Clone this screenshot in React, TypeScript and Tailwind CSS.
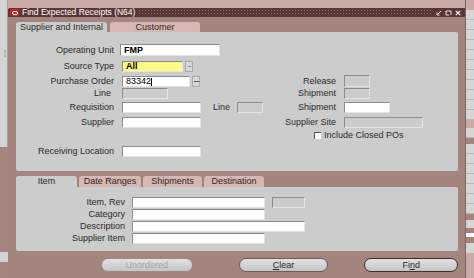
import React from "react";

const lbl = "text-[9px] leading-[11px] text-[#2a2a2a] whitespace-nowrap";

function Input({ className, children }: { className: string; children?: React.ReactNode }) {
  return (
    <div
      className={
        "h-full border border-t-[#8c8c8c] border-l-[#8c8c8c] border-b-[#e4e4e4] border-r-[#e4e4e4] flex items-center px-[3px] text-[9px] leading-[9px] text-black " +
        className
      }
    >
      {children}
    </div>
  );
}

function Row({ className, label, labelW, children }: { className: string; label: string; labelW: string; children?: React.ReactNode }) {
  return (
    <div className={"flex items-center " + className}>
      <div className={lbl + " text-right " + labelW}>{label}</div>
      {children}
    </div>
  );
}

export default function App() {
  const rightRows = [
    "h-[10px] bg-[#c9aca6]",
    "h-[10px] bg-[#d6d6d6] border-b border-[#b8b8b8]",
    "h-[10px] bg-[#d6d6d6] border-b border-[#b8b8b8]",
    "h-[10px] bg-[#d6d6d6] border-b border-[#b8b8b8]",
    "h-[10px] bg-[#d6d6d6] border-b border-[#b8b8b8]",
    "h-[10px] bg-[#d6d6d6] border-b border-[#b8b8b8]",
    "h-[10px] bg-[#d6d6d6] border-b border-[#b8b8b8]",
    "h-[10px] bg-[#d6d6d6] border-b border-[#b8b8b8]",
    "h-[10px] bg-[#d6d6d6] border-b border-[#b8b8b8]",
    "h-[10px] bg-[#d6d6d6] border-b border-[#b8b8b8]",
    "h-[10px] bg-[#d6d6d6] border-b border-[#b8b8b8]",
    "h-[10px] bg-[#d6d6d6] border-b border-[#b8b8b8]",
    "h-[8px] bg-[#c9aca6]",
    "h-[10px] bg-[#d6d6d6] border-b border-[#b8b8b8]",
    "h-[6px] bg-[#a3857d]",
    "h-[10px] bg-[#d6d6d6] border-b border-[#b8b8b8]",
    "h-[10px] bg-[#d6d6d6] border-b border-[#b8b8b8]",
    "h-[10px] bg-[#d6d6d6] border-b border-[#b8b8b8]",
    "h-[10px] bg-[#d6d6d6] border-b border-[#b8b8b8]",
    "h-[10px] bg-[#d6d6d6] border-b border-[#b8b8b8]",
    "h-[10px] bg-[#d6d6d6] border-b border-[#b8b8b8]",
    "h-[10px] bg-[#d6d6d6] border-b border-[#b8b8b8]",
    "h-[6px] bg-[#a3857d]",
    "h-[8px] bg-[#d6d6d6]",
    "h-[5px] bg-[#a3857d]",
    "h-[4px] bg-[#ffffff]",
    "h-[6px] bg-[#a3857d]",
    "h-[10px] bg-[#d6d6d6]",
  ];

  return (
    <div className="w-[474px] h-[278px] flex overflow-hidden bg-[#c9aca6] font-['Liberation_Sans',Arial,sans-serif]">
      {/* left strip (window behind) */}
      <div className="w-[8px] flex flex-col">
        <div className="h-[147px] bg-[#d3d3d3] border-r border-[#a0a0a0] flex flex-col">
          <div className="mt-[49px] ml-[4px] text-[7px] leading-[7px] text-[#888]">[</div>
        </div>
        <div className="h-[105px] bg-[#a5867e]" />
        <div className="h-[10px] bg-[#d3d3d3]" />
        <div className="flex-1 bg-[#a5867e]" />
      </div>

      {/* main window */}
      <div className="w-[457px] flex flex-col pt-[8px]">
        {/* title bar */}
        <div className="h-[9px] bg-[#5a3636] flex items-center rounded-tl-[2px]">
          <div className="ml-[2px] w-[9px] h-[7px] bg-[#d62020] rounded-[2px] flex items-center justify-center">
            <div className="w-[6px] h-[4px] rounded-full border border-white" />
          </div>
          <div className="ml-[3px] text-[8.5px] leading-[9px] text-white whitespace-nowrap">Find Expected Receipts (N64)</div>
          <div className="flex-1 h-[7px] mx-[3px] bg-[radial-gradient(circle,#8e6e6a_0.7px,transparent_0.9px)] bg-[length:3px_3px]" />
          <div className="flex items-center gap-[3px] mr-[4px]">
            <svg width="6" height="6" viewBox="0 0 6 6">
              <path d="M5 1 L1.5 4.5 M1 2.5 V5 H3.5" stroke="#f0e0e0" strokeWidth="1" fill="none" />
            </svg>
            <svg width="7" height="6" viewBox="0 0 7 6">
              <path d="M1 1 H6 V5 M1 1 V5 H4" stroke="#f0e0e0" strokeWidth="1" fill="none" />
            </svg>
            <svg width="6" height="6" viewBox="0 0 6 6">
              <path d="M0.8 0.8 L5.2 5.2 M5.2 0.8 L0.8 5.2" stroke="#ffffff" strokeWidth="1.2" />
            </svg>
          </div>
        </div>

        {/* body */}
        <div className="flex-1 bg-[#a3857d] pl-[8px] pr-[7px] pt-[5px] flex flex-col">
          {/* top tabs */}
          <div className="flex h-[10px] items-end gap-[3px]">
            <div className="w-[91px] h-[10px] bg-[#cccccc] rounded-t-[3px] flex items-center justify-center text-[9px] leading-[9px] text-[#2a2a2a] whitespace-nowrap">
              Supplier and Internal
            </div>
            <div className="w-[90px] h-[10px] bg-[#d7b7b1] rounded-t-[3px] flex items-center justify-center text-[9px] leading-[9px] text-[#2a2a2a]">
              Customer
            </div>
          </div>
          {/* top panel */}
          <div className="h-[139px] bg-[#cccccc] rounded-b-[2px] rounded-tr-[2px] flex">
            {/* left column */}
            <div className="w-[250px] flex flex-col">
              <Row className="mt-[12px] h-[12px]" label="Operating Unit" labelW="w-[98px]">
                <Input className="ml-[6px] w-[100px] bg-white font-bold">FMP</Input>
              </Row>
              <Row className="mt-[5px] h-[11px]" label="Source Type" labelW="w-[98px]">
                <Input className="ml-[8px] w-[61px] bg-[#fafa84] font-bold">All</Input>
                <div className="ml-[2px] w-[8px] h-full border border-[#a8a8a8] bg-[#d8d8d8] flex items-center justify-center">
                  <div className="w-[3px] h-px bg-[#888]" />
                </div>
              </Row>
              <Row className="mt-[4px] h-[11px]" label="Purchase Order" labelW="w-[98px]">
                <Input className="ml-[8px] w-[68px] bg-white">
                  83342<span className="inline-block w-px h-[8px] bg-black" />
                </Input>
                <div className="ml-[2px] w-[8px] h-full border border-[#a8a8a8] bg-[#d8d8d8] flex items-center justify-center">
                  <div className="w-[5px] h-px bg-[#555]" />
                </div>
              </Row>
              <Row className="mt-[1px] h-[11px]" label="Line" labelW="w-[95px]">
                <Input className="ml-[11px] w-[46px] bg-[#cccccc]" />
              </Row>
              <Row className="mt-[3px] h-[11px]" label="Requisition" labelW="w-[98px]">
                <Input className="ml-[8px] w-[79px] bg-white" />
                <div className={lbl + " ml-[12px]"}>Line</div>
                <Input className="ml-[7px] w-[26px] bg-[#cccccc]" />
              </Row>
              <Row className="mt-[4px] h-[11px]" label="Supplier" labelW="w-[98px]">
                <Input className="ml-[8px] w-[79px] bg-white" />
              </Row>
              <Row className="mt-[18px] h-[11px]" label="Receiving Location" labelW="w-[98px]">
                <Input className="ml-[8px] w-[79px] bg-white" />
              </Row>
            </div>
            {/* right column */}
            <div className="flex flex-col">
              <Row className="mt-[43px] h-[12px]" label="Release" labelW="w-[70px]">
                <Input className="ml-[8px] w-[26px] bg-[#cccccc]" />
              </Row>
              <Row className="mt-[1px] h-[11px]" label="Shipment" labelW="w-[70px]">
                <Input className="ml-[8px] w-[26px] bg-[#cccccc]" />
              </Row>
              <Row className="mt-[3px] h-[11px]" label="Shipment" labelW="w-[70px]">
                <Input className="ml-[8px] w-[46px] bg-white" />
              </Row>
              <Row className="mt-[4px] h-[11px]" label="Supplier Site" labelW="w-[70px]">
                <Input className="ml-[8px] w-[79px] bg-[#cccccc]" />
              </Row>
              <div className="mt-[3px] h-[8px] flex items-center">
                <div className="ml-[48px] w-[7px] h-[7px] bg-white border-t border-l border-[#555]" />
                <div className={lbl + " ml-[3px]"}>Include Closed POs</div>
              </div>
            </div>
          </div>

          {/* bottom tabs */}
          <div className="mt-[5px] flex h-[11px] items-end gap-[2px]">
            <div className="w-[61px] h-[11px] bg-[#cccccc] rounded-t-[3px] flex items-center justify-center text-[9px] leading-[9px] text-[#2a2a2a]">
              Item
            </div>
            <div className="w-[62px] h-[11px] bg-[#d7b7b1] rounded-t-[3px] flex items-center justify-center text-[9px] leading-[9px] text-[#2a2a2a]">
              Date Ranges
            </div>
            <div className="w-[59px] h-[11px] bg-[#d7b7b1] rounded-t-[3px] flex items-center justify-center text-[9px] leading-[9px] text-[#2a2a2a]">
              Shipments
            </div>
            <div className="w-[60px] h-[11px] bg-[#d7b7b1] rounded-t-[3px] flex items-center justify-center text-[9px] leading-[9px] text-[#2a2a2a]">
              Destination
            </div>
          </div>
          {/* bottom panel */}
          <div className="h-[64px] bg-[#cccccc] rounded-b-[2px] rounded-tr-[2px] flex flex-col">
            <Row className="mt-[10px] h-[11px]" label="Item, Rev" labelW="w-[109px]">
              <Input className="ml-[7px] w-[133px] bg-white" />
              <Input className="ml-[7px] w-[33px] bg-[#cccccc]" />
            </Row>
            <Row className="mt-[1px] h-[11px]" label="Category" labelW="w-[109px]">
              <Input className="ml-[7px] w-[133px] bg-white" />
            </Row>
            <Row className="mt-[1px] h-[11px]" label="Description" labelW="w-[109px]">
              <Input className="ml-[7px] w-[173px] bg-white" />
            </Row>
            <Row className="mt-[1px] h-[11px]" label="Supplier Item" labelW="w-[109px]">
              <Input className="ml-[7px] w-[133px] bg-white" />
            </Row>
          </div>

          {/* buttons */}
          <div className="mt-[7px] h-[14px] flex">
            <div className="ml-[85px] w-[92px] h-full rounded-full border border-[#9a8a88] bg-[linear-gradient(#e2e2e2,#c4c4c4)] flex items-center justify-center text-[9px] leading-[9px] text-[#a2a2a2]">
              Unordered
            </div>
            <div className="ml-[46px] w-[90px] h-full rounded-full border border-[#6e5e5c] bg-[linear-gradient(#e2e2e2,#c4c4c4)] flex items-center justify-center text-[9px] leading-[9px] text-[#2a2a2a]">
              <span className="underline">C</span>lear
            </div>
            <div className="ml-[36px] w-[94px] h-full rounded-full border border-[#3e2e2c] bg-[linear-gradient(#e2e2e2,#c4c4c4)] flex items-center justify-center text-[9px] leading-[9px] text-[#2a2a2a]">
              Fi<span className="underline">n</span>d
            </div>
          </div>
        </div>
      </div>

      {/* right strip (window behind) */}
      <div className="flex-1 flex flex-col border-l border-[#7a6660]">
        {rightRows.map((c, i) => (
          <div key={i} className={c} />
        ))}
      </div>
    </div>
  );
}
